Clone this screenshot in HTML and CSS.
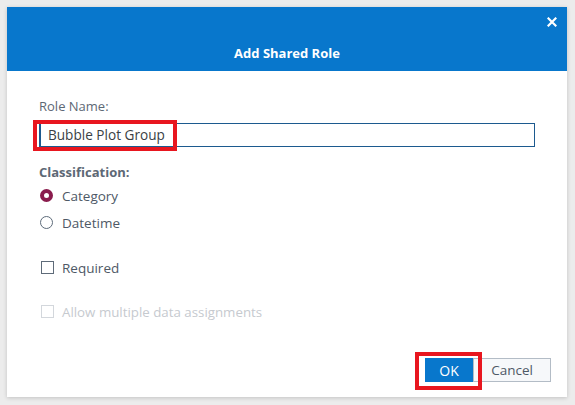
FILE: index.html
```html
<!DOCTYPE html>
<html>
<head>
<meta charset="utf-8">
<link rel="stylesheet" href="styles.css">
</head>
<body>
<div class="dialog">
  <div class="header">
    <button class="close" aria-label="Close">
      <svg width="10" height="10" viewBox="0 0 10 10"><path d="M1.5 1.5 L8.5 8.5 M8.5 1.5 L1.5 8.5" stroke="#fff" stroke-width="2.2" stroke-linecap="square"/></svg>
    </button>
    <div class="title">Add Shared Role</div>
  </div>
  <div class="body">
    <div class="label">Role Name:</div>
    <div class="input">Bubble Plot Group</div>
    <div class="section">Classification:</div>
    <div class="row"><span class="radio checked"></span><span>Category</span></div>
    <div class="row"><span class="radio"></span><span>Datetime</span></div>
    <div class="row spaced"><span class="check"></span><span>Required</span></div>
    <div class="row spaced disabled"><span class="check"></span><span>Allow multiple data assignments</span></div>
    <div class="footer">
      <button class="btn primary">OK</button>
      <button class="btn">Cancel</button>
    </div>
  </div>
  <span class="mark mark-input"></span>
  <span class="mark mark-ok"></span>
</div>
</body>
</html>
```
FILE: styles.css
```css
html, body { margin: 0; padding: 0; }
body {
  width: 575px;
  height: 405px;
  background: #ececec;
  font-family: "Open Sans", Lato, sans-serif;
  overflow: hidden;
}
.dialog {
  position: relative;
  margin: 7px 0 0 7px;
  width: 560px;
  height: 390px;
  background: #fff;
  box-shadow: 0 1px 4px rgba(0,0,0,0.18);
  display: flex;
  flex-direction: column;
}
.header {
  position: relative;
  height: 64px;
  background: #0877cc;
  display: flex;
  align-items: flex-end;
  justify-content: center;
}
.title {
  color: #fff;
  font-weight: 700;
  font-size: 13px;
  line-height: 18px;
  margin-bottom: 9px;
}
.close {
  position: absolute;
  right: 8px;
  top: 8px;
  width: 14px;
  height: 14px;
  padding: 2px;
  border: 0;
  background: transparent;
  display: flex;
  align-items: center;
  justify-content: center;
}
.body {
  flex: 1;
  display: flex;
  flex-direction: column;
  padding: 27px 16px 15px 32px;
}
.label {
  font-size: 13px;
  line-height: 16px;
  color: #5d6875;
}
.input {
  margin-top: 9px;
  margin-right: 16px;
  height: 24px;
  box-sizing: border-box;
  border: 1px solid #1c5a8f;
  border-left-width: 2px;
  padding-left: 7px;
  font-size: 13.6px;
  line-height: 22px;
  color: #3a3f45;
}
.section {
  margin-top: 17px;
  font-size: 13px;
  line-height: 16px;
  font-weight: 700;
  color: #5d6875;
}
.row {
  display: flex;
  align-items: center;
  height: 27px;
  font-size: 13.5px;
  color: #4e5966;
}
.section + .row { margin-top: 2px; }
.row.spaced { margin-top: 18px; }
.row.spaced + .row.spaced { margin-top: 17px; }
.row.disabled { font-size: 13.3px; }
.radio {
  width: 13px;
  height: 13px;
  box-sizing: border-box;
  border: 1px solid #5d6b7a;
  border-radius: 50%;
  margin-left: 1px;
  margin-right: 9px;
  background: #fff;
}
.radio.checked {
  border: 4px solid #8a1c4d;
}
.check {
  width: 13px;
  height: 13px;
  box-sizing: border-box;
  border: 1px solid #5e6b79;
  margin-left: 2px;
  margin-right: 8px;
}
.disabled { color: #c6cacf; }
.disabled .check { border-color: #d3d7dc; }
.footer {
  margin-top: auto;
  display: flex;
  justify-content: flex-end;
}
.btn {
  height: 24px;
  box-sizing: border-box;
  font-family: "Open Sans", Lato, sans-serif;
  font-size: 13.5px;
  padding: 0;
  margin: 0;
  border: 1px solid #b3bcc6;
  background: #f6f8fa;
  color: #4e5966;
  width: 78px;
}
.btn.primary {
  width: 48px;
  font-size: 14px;
  background: #0877cc;
  border-color: #0877cc;
  color: #fff;
}
.mark {
  position: absolute;
  border: 4px solid #e8161f;
  box-sizing: border-box;
}
.mark-input {
  left: 26px;
  top: 113px;
  width: 144px;
  height: 31px;
}
.mark-ok {
  left: 408px;
  top: 345px;
  width: 67px;
  height: 38px;
}
```
